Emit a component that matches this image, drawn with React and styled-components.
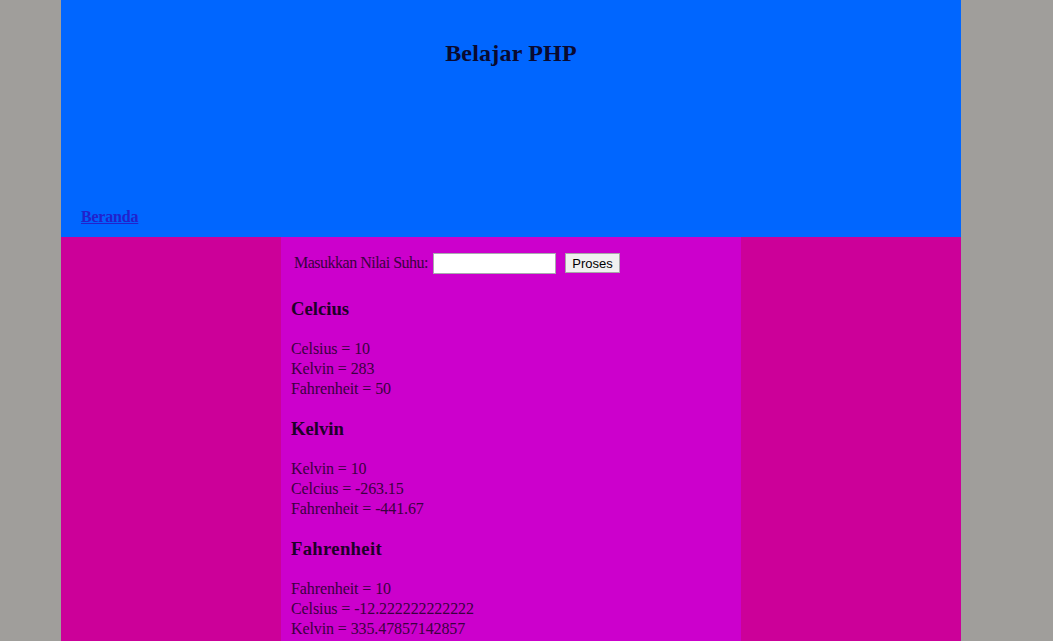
import { createGlobalStyle, styled } from 'styled-components';

const GlobalStyle = createGlobalStyle`
  html, body {
    margin: 0;
    padding: 0;
    background: #a09e9b;
    font-family: 'Liberation Serif', 'Times New Roman', serif;
  }
`;

const results = [
  {
    title: 'Celcius',
    lines: ['Celsius = 10', 'Kelvin = 283', 'Fahrenheit = 50'],
  },
  {
    title: 'Kelvin',
    lines: ['Kelvin = 10', 'Celcius = -263.15', 'Fahrenheit = -441.67'],
  },
  {
    title: 'Fahrenheit',
    wide: true,
    lines: ['Fahrenheit = 10', 'Celsius = -12.222222222222', 'Kelvin = 335.47857142857'],
  },
];

const App = () => {
  return (
    <>
      <GlobalStyle />
      <Wrapper>
        <Header>
          <Title>Belajar PHP</Title>
          <Nav>
            <NavLink href='#'>Beranda</NavLink>
          </Nav>
        </Header>
        <Columns>
          <Side />
          <Main>
            <Form onSubmit={(e) => e.preventDefault()}>
              <Label>Masukkan Nilai Suhu:</Label>
              <Input type='text' />
              <Button type='submit'>Proses</Button>
            </Form>
            {results.map((r) => (
              <Section key={r.title}>
                <Heading $wide={r.wide}>{r.title}</Heading>
                <Lines>
                  {r.lines.map((l) => (
                    <Line key={l}>{l}</Line>
                  ))}
                </Lines>
              </Section>
            ))}
          </Main>
          <Side />
        </Columns>
      </Wrapper>
    </>
  );
};

export default App;

const Wrapper = styled.div`
  width: 900px;
  margin-left: 61px;
  min-height: 100vh;
  display: flex;
  flex-direction: column;
`;

const Header = styled.header`
  background: #0066ff;
  height: 237px;
  display: flex;
  flex-direction: column;
  justify-content: space-between;
  box-sizing: border-box;
  padding: 39px 20px 10px;
`;

const Title = styled.h2`
  margin: 0;
  text-align: center;
  font-size: 24px;
  line-height: 28px;
  font-weight: bold;
  color: #0a0a30;
  letter-spacing: 0.2px;
`;

const Nav = styled.nav`
  display: flex;
  gap: 20px;
`;

const NavLink = styled.a`
  font-size: 16px;
  line-height: 20px;
  font-weight: bold;
  color: #2222cc;
  text-decoration: underline;
  letter-spacing: -0.2px;
`;

const Columns = styled.div`
  flex: 1;
  display: grid;
  grid-template-columns: 220px 460px 1fr;
`;

const Side = styled.aside`
  background: #cc0099;
`;

const Main = styled.main`
  background: #cc00cc;
  padding: 14px 10px 0;
  color: #2a0030;
`;

const Form = styled.form`
  display: flex;
  align-items: center;
  height: 24px;
  margin: 0 0 0 3px;
`;

const Label = styled.label`
  font-size: 16px;
  letter-spacing: -0.5px;
  color: #3a0040;
`;

const Input = styled.input`
  box-sizing: border-box;
  width: 123px;
  height: 21px;
  margin-left: 5px;
  border: 1px solid #a9a9b0;
  background: #fff;
  padding: 1px 3px;
`;

const Button = styled.button`
  box-sizing: border-box;
  width: 55px;
  height: 20px;
  margin-left: 9px;
  padding: 0;
  font-family: 'Liberation Sans', Arial, sans-serif;
  font-size: 13px;
  color: #000;
  background: #f0f0f0;
  border: 1px solid #a8a8a8;
`;

const Section = styled.section`
  margin-top: 23px;

  & + & {
    margin-top: 19.5px;
  }
`;

const Heading = styled.h3`
  margin: 0;
  font-size: 18.7px;
  line-height: 22px;
  font-weight: bold;
  color: #200028;
  letter-spacing: ${(p) => (p.$wide ? '0.3px' : '0')};
`;

const Lines = styled.div`
  margin-top: 18.5px;
  font-size: 16px;
  line-height: 20px;
  letter-spacing: -0.1px;
  color: #3a0040;
`;

const Line = styled.div``;
